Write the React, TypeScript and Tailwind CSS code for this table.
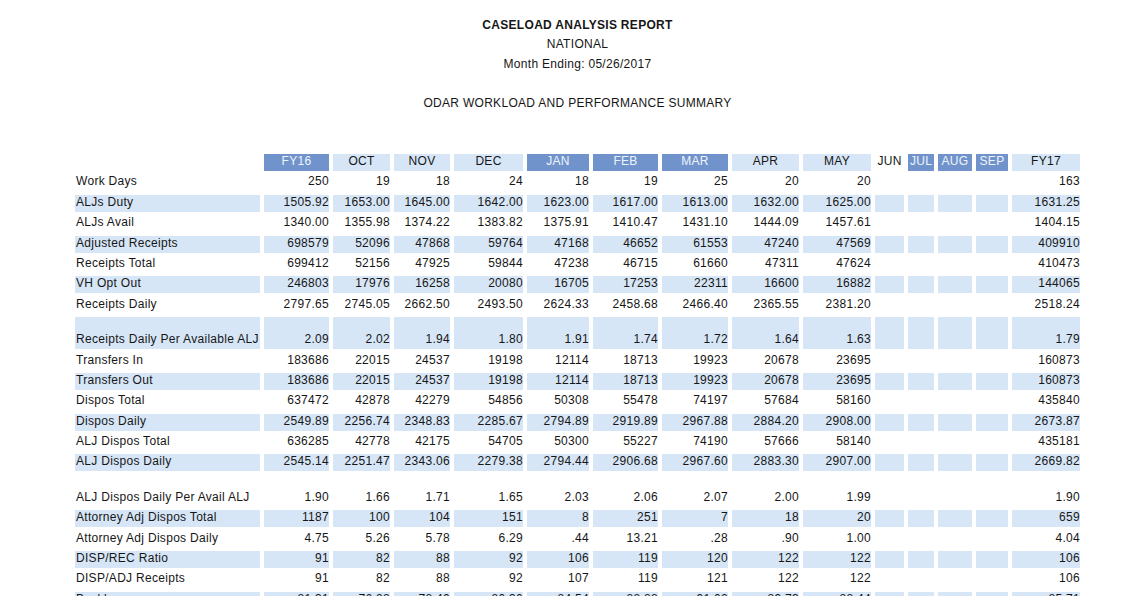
import React from "react";

type Row = {
  label: string;
  vals: string[]; // FY16, OCT..MAY (9 values)
  fy17: string;
  stripe: boolean;
  tall?: boolean;
};

const rows: Row[] = [
  { label: "Work Days", vals: ["250", "19", "18", "24", "18", "19", "25", "20", "20"], fy17: "163", stripe: false },
  { label: "ALJs Duty", vals: ["1505.92", "1653.00", "1645.00", "1642.00", "1623.00", "1617.00", "1613.00", "1632.00", "1625.00"], fy17: "1631.25", stripe: true },
  { label: "ALJs Avail", vals: ["1340.00", "1355.98", "1374.22", "1383.82", "1375.91", "1410.47", "1431.10", "1444.09", "1457.61"], fy17: "1404.15", stripe: false },
  { label: "Adjusted Receipts", vals: ["698579", "52096", "47868", "59764", "47168", "46652", "61553", "47240", "47569"], fy17: "409910", stripe: true },
  { label: "Receipts Total", vals: ["699412", "52156", "47925", "59844", "47238", "46715", "61660", "47311", "47624"], fy17: "410473", stripe: false },
  { label: "VH Opt Out", vals: ["246803", "17976", "16258", "20080", "16705", "17253", "22311", "16600", "16882"], fy17: "144065", stripe: true },
  { label: "Receipts Daily", vals: ["2797.65", "2745.05", "2662.50", "2493.50", "2624.33", "2458.68", "2466.40", "2365.55", "2381.20"], fy17: "2518.24", stripe: false },
  { label: "Receipts Daily Per Available ALJ", vals: ["2.09", "2.02", "1.94", "1.80", "1.91", "1.74", "1.72", "1.64", "1.63"], fy17: "1.79", stripe: true, tall: true },
  { label: "Transfers In", vals: ["183686", "22015", "24537", "19198", "12114", "18713", "19923", "20678", "23695"], fy17: "160873", stripe: false },
  { label: "Transfers Out", vals: ["183686", "22015", "24537", "19198", "12114", "18713", "19923", "20678", "23695"], fy17: "160873", stripe: true },
  { label: "Dispos Total", vals: ["637472", "42878", "42279", "54856", "50308", "55478", "74197", "57684", "58160"], fy17: "435840", stripe: false },
  { label: "Dispos Daily", vals: ["2549.89", "2256.74", "2348.83", "2285.67", "2794.89", "2919.89", "2967.88", "2884.20", "2908.00"], fy17: "2673.87", stripe: true },
  { label: "ALJ Dispos Total", vals: ["636285", "42778", "42175", "54705", "50300", "55227", "74190", "57666", "58140"], fy17: "435181", stripe: false },
  { label: "ALJ Dispos Daily", vals: ["2545.14", "2251.47", "2343.06", "2279.38", "2794.44", "2906.68", "2967.60", "2883.30", "2907.00"], fy17: "2669.82", stripe: true },
  { label: "ALJ Dispos Daily Per Avail ALJ", vals: ["1.90", "1.66", "1.71", "1.65", "2.03", "2.06", "2.07", "2.00", "1.99"], fy17: "1.90", stripe: false, tall: true },
  { label: "Attorney Adj Dispos Total", vals: ["1187", "100", "104", "151", "8", "251", "7", "18", "20"], fy17: "659", stripe: true },
  { label: "Attorney Adj Dispos Daily", vals: ["4.75", "5.26", "5.78", "6.29", ".44", "13.21", ".28", ".90", "1.00"], fy17: "4.04", stripe: false },
  { label: "DISP/REC Ratio", vals: ["91", "82", "88", "92", "106", "119", "120", "122", "122"], fy17: "106", stripe: true },
  { label: "DISP/ADJ Receipts", vals: ["91", "82", "88", "92", "107", "119", "121", "122", "122"], fy17: "106", stripe: false },
  { label: "Backlog", vals: ["81.31", "76.28", "78.40", "80.30", "84.54", "88.88", "91.02", "89.73", "88.44"], fy17: "85.71", stripe: true },
];

const headers: { t: string; kind: "dark" | "light" | "none" }[] = [
  { t: "", kind: "none" },
  { t: "FY16", kind: "dark" },
  { t: "OCT", kind: "light" },
  { t: "NOV", kind: "light" },
  { t: "DEC", kind: "light" },
  { t: "JAN", kind: "dark" },
  { t: "FEB", kind: "dark" },
  { t: "MAR", kind: "dark" },
  { t: "APR", kind: "light" },
  { t: "MAY", kind: "light" },
  { t: "JUN", kind: "none" },
  { t: "JUL", kind: "dark" },
  { t: "AUG", kind: "dark" },
  { t: "SEP", kind: "dark" },
  { t: "FY17", kind: "light" },
];

function Cell({ text, stripe, tall, left }: { text: string; stripe: boolean; tall?: boolean; left?: boolean }) {
  return (
    <div
      className={`${tall ? "h-[32px]" : "h-[17px]"} flex flex-col justify-end ${stripe ? "bg-[#d6e6f7]" : ""}`}
    >
      <div className={`h-[17px] leading-[14px] whitespace-nowrap ${left ? "pl-[1px] text-left" : "text-right"}`}>{text}</div>
    </div>
  );
}

export default function App() {
  return (
    <div
      className="bg-white text-[#161616] text-[12px] tracking-[0.3px] min-h-[596px] overflow-hidden"
      style={{ fontFamily: '"Liberation Sans", Arial, sans-serif' }}
    >
      <div className="ml-[75px] w-[1005px]">
        <div className="pt-[16px] text-center leading-[19.3px]">
          <div className="font-bold">CASELOAD ANALYSIS REPORT</div>
          <div>NATIONAL</div>
          <div>Month Ending: 05/26/2017</div>
          <div className="mt-[20.5px]">ODAR WORKLOAD AND PERFORMANCE SUMMARY</div>
        </div>

        <div className="mt-[40.3px] grid grid-cols-[185px_65px_57px_56px_69px_62px_65px_66px_67px_68px_29px_26px_34px_32px_68px] gap-x-[4px] gap-y-[3.4px]">
          {headers.map((h, i) => (
            <div
              key={`h${i}`}
              className={`h-[17px] leading-[14px] text-center whitespace-nowrap ${
                h.kind === "dark"
                  ? "bg-[#7193cb] text-[#eef3fb]"
                  : h.kind === "light"
                  ? "bg-[#d6e6f7]"
                  : ""
              }`}
            >
              {h.t}
            </div>
          ))}
          {rows.map((r, ri) => (
            <React.Fragment key={ri}>
              <Cell text={r.label} stripe={r.stripe} tall={r.tall} left />
              {r.vals.map((v, vi) => (
                <Cell key={vi} text={v} stripe={r.stripe} tall={r.tall} />
              ))}
              {[0, 1, 2, 3].map((k) => (
                <Cell key={`e${k}`} text="" stripe={r.stripe} tall={r.tall} />
              ))}
              <Cell text={r.fy17} stripe={r.stripe} tall={r.tall} />
            </React.Fragment>
          ))}
        </div>
      </div>
    </div>
  );
}
